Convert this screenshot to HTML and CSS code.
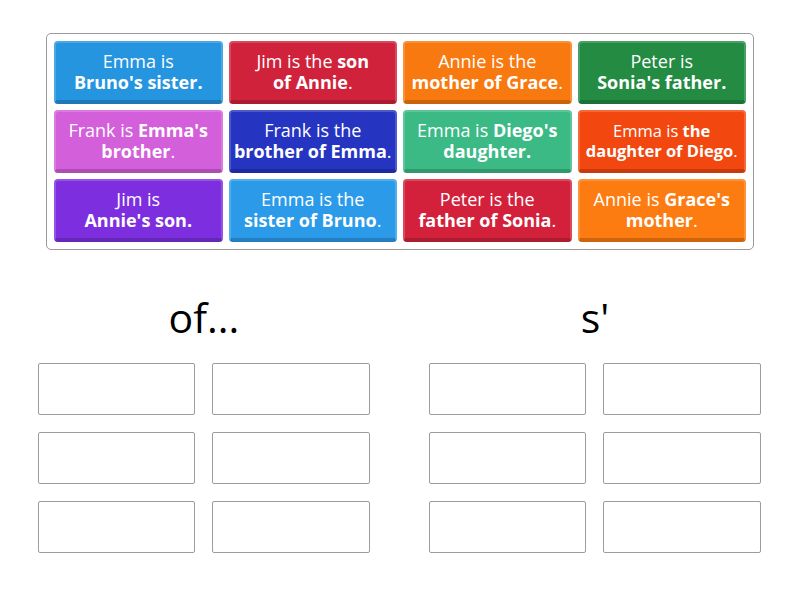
FILE: index.html
```html
<!DOCTYPE html>
<html>
<head>
<meta charset="utf-8">
<link rel="stylesheet" href="styles.css">
</head>
<body>
<div class="bank">
  <div class="tile c-blue"><span>Emma is<br><b>Bruno's sister.</b></span></div>
  <div class="tile c-red"><span>Jim is the <b>son</b><br><b>of Annie</b>.</span></div>
  <div class="tile c-orange"><span>Annie is the<br><b>mother of Grace</b>.</span></div>
  <div class="tile c-green"><span>Peter is<br><b>Sonia's father.</b></span></div>
  <div class="tile c-pink"><span>Frank is <b>Emma's</b><br><b>brother</b>.</span></div>
  <div class="tile c-navy"><span>Frank is the<br><b>brother of Emma</b>.</span></div>
  <div class="tile c-teal"><span>Emma is <b>Diego's</b><br><b>daughter.</b></span></div>
  <div class="tile c-redorange small"><span>Emma is <b>the</b><br><b>daughter of Diego</b>.</span></div>
  <div class="tile c-purple"><span>Jim is<br><b>Annie's son.</b></span></div>
  <div class="tile c-lightblue"><span>Emma is the<br><b>sister of Bruno</b>.</span></div>
  <div class="tile c-red2"><span>Peter is the<br><b>father of Sonia</b>.</span></div>
  <div class="tile c-orange2"><span>Annie is <b>Grace's</b><br><b>mother</b>.</span></div>
</div>
<div class="groups">
  <div class="group">
    <div class="heading">of...</div>
    <div class="slots">
      <div class="slot"></div><div class="slot"></div>
      <div class="slot"></div><div class="slot"></div>
      <div class="slot"></div><div class="slot"></div>
    </div>
  </div>
  <div class="group">
    <div class="heading">s'</div>
    <div class="slots">
      <div class="slot"></div><div class="slot"></div>
      <div class="slot"></div><div class="slot"></div>
      <div class="slot"></div><div class="slot"></div>
    </div>
  </div>
</div>
</body>
</html>
```
FILE: styles.css
```css
html, body {
  margin: 0;
  padding: 0;
  background: #ffffff;
  font-family: "Open Sans", "Noto Sans", sans-serif;
}
.bank {
  margin: 33px 0 0 46px;
  width: 708px;
  box-sizing: border-box;
  border: 1px solid #9a9a9a;
  border-radius: 5px;
  padding: 7px;
  display: grid;
  grid-template-columns: repeat(4, minmax(0, 1fr));
  column-gap: 6px;
  row-gap: 6px;
}
.tile {
  height: 63px;
  box-sizing: border-box;
  border-radius: 4px;
  border: 2px solid rgba(255,255,255,0.18);
  border-bottom: 4px solid rgba(0,0,0,0.18);
  color: #ffffff;
  font-size: 18px;
  line-height: 21px;
  text-align: center;
  display: flex;
  align-items: center;
  justify-content: center;
  padding-top: 1px;
  white-space: nowrap;
}
.tile b { font-weight: 700; }
.tile.small { font-size: 16.5px; line-height: 20px; }
.c-blue { background: #2595e0; }
.c-red { background: #d0223b; }
.c-orange { background: #f7790f; }
.c-green { background: #238b42; }
.c-pink { background: #d35fda; }
.c-navy { background: #2634c2; }
.c-teal { background: #3cba86; }
.c-redorange { background: #f2470f; }
.c-purple { background: #7d2fdf; }
.c-lightblue { background: #2b9be9; }
.c-red2 { background: #d3213b; }
.c-orange2 { background: #fc7c12; }
.groups {
  margin: 42px 0 0 38px;
  display: flex;
  gap: 59px;
}
.group {
  width: 332px;
}
.heading {
  text-align: center;
  font-size: 41px;
  line-height: 50px;
  color: #000000;
  height: 50px;
}
.slots {
  margin-top: 21px;
  display: grid;
  grid-template-columns: 157px 158px;
  column-gap: 17px;
  row-gap: 17px;
}
.slot {
  height: 52px;
  box-sizing: border-box;
  border: 1px solid #9c9c9c;
  border-radius: 2px;
  background: #ffffff;
}
```
